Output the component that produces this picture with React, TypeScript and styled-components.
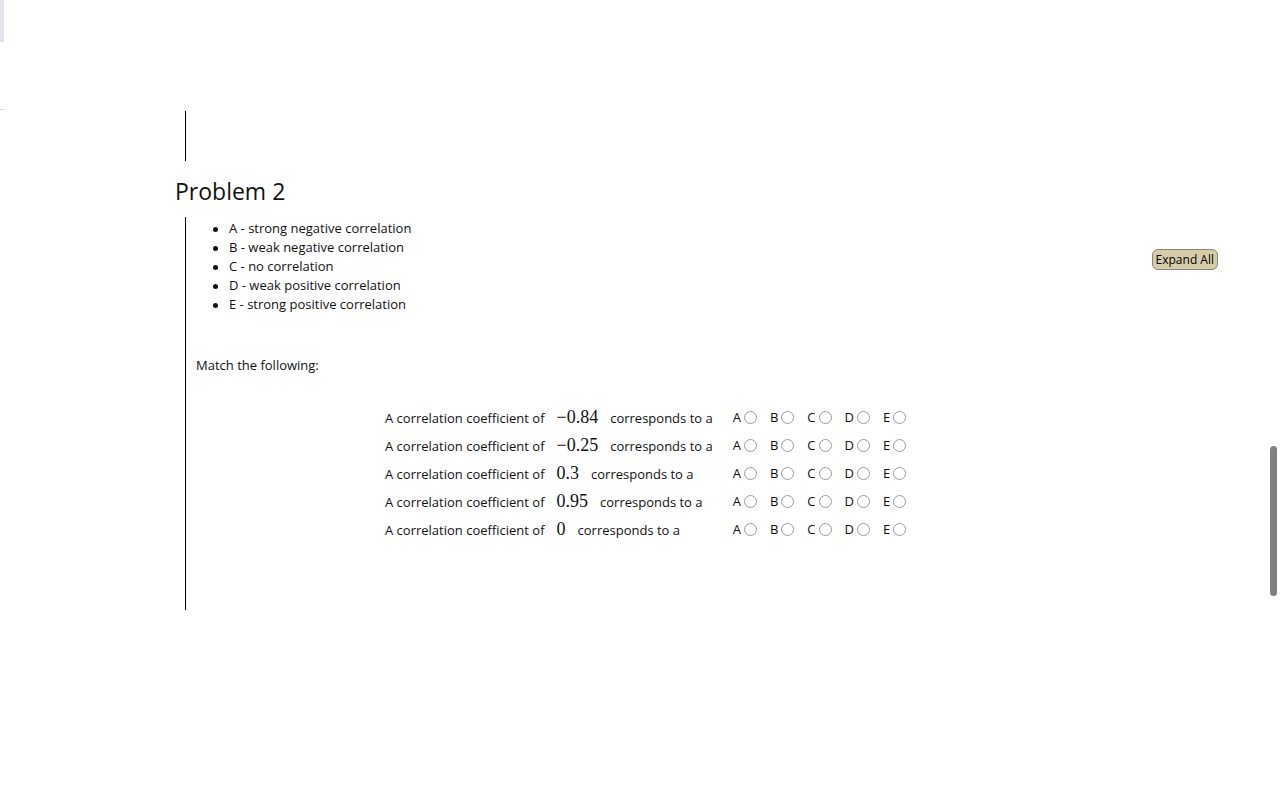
import React from "react";
import styled, { createGlobalStyle } from "styled-components";

const Global = createGlobalStyle`
  html, body { margin: 0; padding: 0; background: #fff; }
  body { font-family: "DejaVu Sans", Verdana, sans-serif; color: #000; overflow: hidden; }
`;

const Page = styled.div`
  position: relative;
  width: 1280px;
  height: 800px;
  display: flex;
  flex-direction: column;
`;

const TopTab = styled.div`
  position: absolute;
  left: 0;
  top: 0;
  width: 4px;
  height: 42px;
  background: #e1e4ea;
`;

const TopRule = styled.div`
  position: absolute;
  left: 0;
  top: 109px;
  width: 5px;
  height: 1px;
  background: #d8d8d8;
`;

const Scrollbar = styled.div`
  position: absolute;
  right: 3px;
  top: 446px;
  width: 7px;
  height: 150px;
  border-radius: 4px;
  background: #808080;
`;

const Content = styled.div`
  padding: 111px 0 0 175px;
  display: flex;
  flex-direction: column;
`;

const Spacer = styled.div`
  margin-left: 10px;
  border-left: 1px solid #000;
  height: 50px;
`;

const Title = styled.h2`
  margin: 14px 0 0 0;
  font-family: "Open Sans", "DejaVu Sans", sans-serif;
  font-weight: 400;
  font-size: 23px;
  line-height: 32px;
  color: #111;
`;

const Body = styled.div`
  position: relative;
  margin: 10px 0 0 10px;
  border-left: 1px solid #000;
  height: 393px;
  width: 1034px;
  font-family: "Open Sans", "DejaVu Sans", sans-serif;
  font-size: 13px;
`;

const List = styled.ul`
  margin: 0;
  padding: 2px 0 0 43px;
  list-style: none;
  line-height: 19px;
  color: #111;
`;

const Item = styled.li`
  position: relative;
  &::before {
    content: "";
    position: absolute;
    left: -16px;
    top: 8px;
    width: 5px;
    height: 5px;
    border-radius: 50%;
    background: #111;
  }
`;

const ExpandButton = styled.button`
  position: absolute;
  right: 2px;
  top: 32px;
  font-family: "Open Sans", "DejaVu Sans", sans-serif;
  font-size: 12px;
  line-height: 16px;
  padding: 2px 3px 1px;
  border: 1px solid #8a8576;
  border-radius: 6px;
  background: #d6ccaa;
  color: #000;
`;

const Prompt = styled.p`
  margin: 42px 0 0 10px;
  line-height: 18px;
  color: #111;
`;

const Table = styled.table`
  margin: 29px 0 0 196px;
  border-collapse: collapse;
  color: #111;
`;

const Row = styled.tr`
  height: 28px;
`;

const QuestionCell = styled.td`
  padding: 0 19px 0 3px;
  white-space: nowrap;
  vertical-align: middle;
`;

const MathNum = styled.span`
  font-family: "Liberation Serif", "Times New Roman", serif;
  font-size: 18px;
  margin: 0 12px 0 12px;
`;

const ChoiceCell = styled.td`
  white-space: nowrap;
  vertical-align: middle;
`;

const Choice = styled.label`
  display: inline-flex;
  align-items: center;
  margin-right: 13px;
`;

const Radio = styled.span`
  display: inline-block;
  width: 11px;
  height: 11px;
  margin-left: 3px;
  border: 1px solid #9a9a9a;
  border-radius: 50%;
  background: #fff;
`;

const items = [
  "A - strong negative correlation",
  "B - weak negative correlation",
  "C - no correlation",
  "D - weak positive correlation",
  "E - strong positive correlation",
];

const rows = ["\u22120.84", "\u22120.25", "0.3", "0.95", "0"];
const letters = ["A", "B", "C", "D", "E"];

export default function App() {
  return (
    <Page>
      <Global />
      <TopTab />
      <TopRule />
      <Content>
        <Spacer />
        <Title>Problem 2</Title>
        <Body>
          <List>
            {items.map((t) => (
              <Item key={t}>{t}</Item>
            ))}
          </List>
          <ExpandButton>Expand All</ExpandButton>
          <Prompt>Match the following:</Prompt>
          <Table>
            <tbody>
              {rows.map((r) => (
                <Row key={r}>
                  <QuestionCell>
                    A correlation coefficient of<MathNum>{r}</MathNum>corresponds to a
                  </QuestionCell>
                  <ChoiceCell>
                    {letters.map((l) => (
                      <Choice key={l}>
                        {l}
                        <Radio />
                      </Choice>
                    ))}
                  </ChoiceCell>
                </Row>
              ))}
            </tbody>
          </Table>
        </Body>
      </Content>
      <Scrollbar />
    </Page>
  );
}
